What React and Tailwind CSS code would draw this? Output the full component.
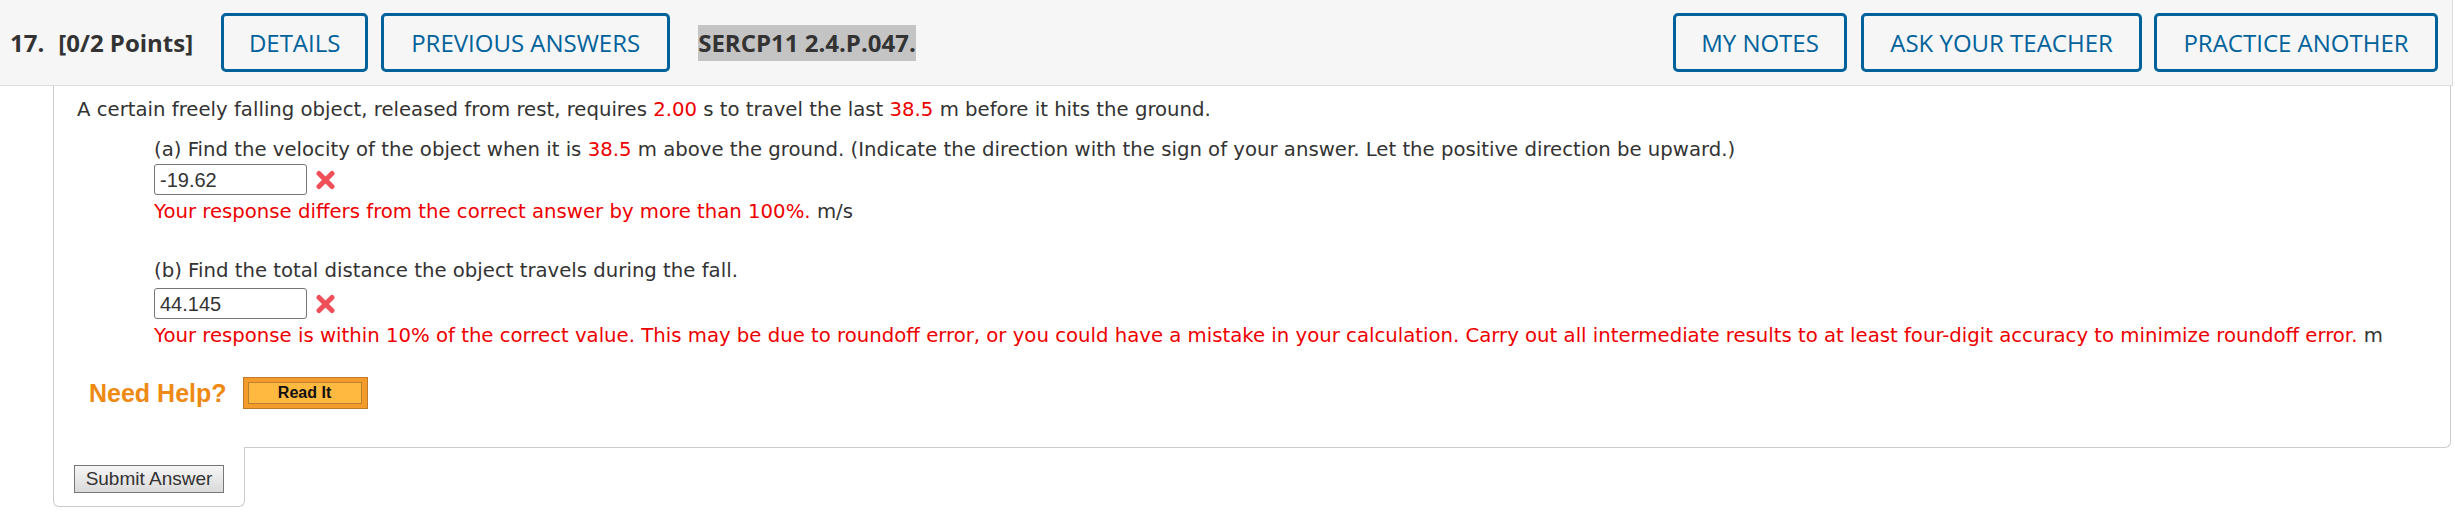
function HeaderButton({ children, className = "" }) {
  return (
    <div
      className={`flex h-[59px] items-center justify-center rounded-[5px] border-[3px] border-[#00629b] whitespace-nowrap text-[#00629b] ${className}`}
    >
      {children}
    </div>
  );
}

function WrongMark() {
  return (
    <svg width="21" height="20" viewBox="0 0 21 20" className="ml-[8px]">
      <path
        d="M4 3.5 L17 16.5 M17 3.5 L4 16.5"
        stroke="#ee4f58"
        strokeWidth="5"
        strokeLinecap="round"
      />
    </svg>
  );
}

function AnswerBox({ value, className = "" }) {
  return (
    <div className={`flex items-center ${className}`}>
      <div className="flex h-[31px] w-[153px] items-center rounded-[3px] border border-[#767676] pl-[5px] font-['Liberation_Sans',Arial,sans-serif] text-[20px] text-[#333]">
        {value}
      </div>
      <WrongMark />
    </div>
  );
}

export default function App() {
  return (
    <div className="w-[2453px] bg-white font-['DejaVu_Sans',Verdana,sans-serif] text-[19.7px] text-[#333]">
      {/* question header */}
      <div className="flex h-[86px] items-center border-r border-b border-[#ddd] bg-[#f6f6f6] pr-[14px] pl-[10px] font-['Open_Sans',sans-serif] text-[24px]">
        <span className="font-bold">17.</span>
        <span className="ml-[14px] font-bold">[0/2 Points]</span>
        <HeaderButton className="ml-[28px] w-[147px]">DETAILS</HeaderButton>
        <HeaderButton className="ml-[13px] w-[289px]">PREVIOUS ANSWERS</HeaderButton>
        <span className="ml-[28px] bg-[#c4c4c4] leading-[36px] font-bold">SERCP11 2.4.P.047.</span>
        <div className="ml-auto flex">
          <HeaderButton className="w-[174px]">MY NOTES</HeaderButton>
          <HeaderButton className="ml-[14px] w-[281px]">ASK YOUR TEACHER</HeaderButton>
          <HeaderButton className="ml-[12px] w-[284px]">PRACTICE ANOTHER</HeaderButton>
        </div>
      </div>

      <div className="mr-[2px] ml-[53px]">
        {/* question body */}
        <div className="rounded-br-[6px] border-x border-b border-[#ccc] pt-[12px] pb-[38px] pl-[23px] leading-[24px]">
          <p>
            A certain freely falling object, released from rest, requires{" "}
            <span className="text-[#e00]">2.00</span> s to travel the last{" "}
            <span className="text-[#e00]">38.5</span> m before it hits the ground.
          </p>

          <div className="mt-[16px] ml-[77px]">
            <p>
              (a) Find the velocity of the object when it is <span className="text-[#e00]">38.5</span> m
              above the ground. (Indicate the direction with the sign of your answer. Let the positive
              direction be upward.)
            </p>
            <AnswerBox value="-19.62" className="mt-[2px]" />
            <p className="mt-[5px] text-[#e00]">
              Your response differs from the correct answer by more than 100%.{" "}
              <span className="text-[#333]">m/s</span>
            </p>

            <p className="mt-[35px]">(b) Find the total distance the object travels during the fall.</p>
            <AnswerBox value="44.145" className="mt-[5px]" />
            <p className="mt-[5px] whitespace-nowrap text-[#e00]">
              Your response is within 10% of the correct value. This may be due to roundoff error, or you
              could have a mistake in your calculation. Carry out all intermediate results to at least
              four-digit accuracy to minimize roundoff error. <span className="text-[#333]">m</span>
            </p>
          </div>

          <div className="mt-[29px] ml-[12px] flex items-center">
            <span className="font-['Liberation_Sans',Arial,sans-serif] text-[25px] leading-[32px] font-bold text-[#ee8a14]">
              Need Help?
            </span>
            <div className="ml-[16px] h-[32px] w-[125px] border border-[#c0782a] bg-[#f39c2c] py-[4px] pr-[5px] pl-[4px]">
              <div className="flex h-full items-center justify-center border border-[#b9802f] bg-[#ffb840] font-['Liberation_Sans',Arial,sans-serif] text-[16px] font-bold text-[#111]">
                Read It
              </div>
            </div>
          </div>
        </div>

        {/* submit tab */}
        <div className="relative -mt-px w-[192px] rounded-b-[6px] border-x border-b border-[#ccc] bg-white pt-[17px] pb-[12px] pl-[20px]">
          <button className="h-[28px] w-[150px] border border-[#777] bg-gradient-to-b from-[#f6f6f6] to-[#dadada] font-['Liberation_Sans',Arial,sans-serif] text-[19px] leading-none text-[#333]">
            Submit Answer
          </button>
        </div>
      </div>
    </div>
  );
}
